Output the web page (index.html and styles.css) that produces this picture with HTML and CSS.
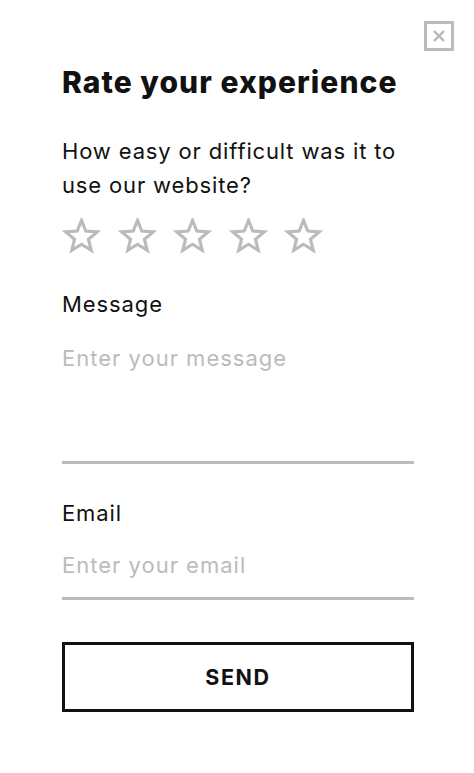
FILE: index.html
```html
<!DOCTYPE html>
<html lang="en">
<head>
<meta charset="utf-8">
<title>Rate your experience</title>
<link rel="stylesheet" href="styles.css">
</head>
<body>
<div class="dialog">
  <div class="topbar">
    <button class="close" aria-label="Close">
      <svg viewBox="0 0 24 24"><path d="M4.5 4.5 L19.5 19.5 M19.5 4.5 L4.5 19.5" stroke="#b5b5b5" stroke-width="3.4" fill="none"/></svg>
    </button>
  </div>
  <h1 class="title">Rate your experience</h1>
  <p class="question">How easy or difficult was it to use our website?</p>
  <div class="stars">
    <svg class="star" viewBox="0 0 40 37"><polygon points="20,2 24.41,12.93 36.17,13.75 27.13,21.32 29.99,32.75 20,26.5 10.01,32.75 12.87,21.32 3.83,13.75 15.59,12.93" fill="none" stroke="#bbbbbb" stroke-width="3.2"/></svg>
    <svg class="star" viewBox="0 0 40 37"><polygon points="20,2 24.41,12.93 36.17,13.75 27.13,21.32 29.99,32.75 20,26.5 10.01,32.75 12.87,21.32 3.83,13.75 15.59,12.93" fill="none" stroke="#bbbbbb" stroke-width="3.2"/></svg>
    <svg class="star" viewBox="0 0 40 37"><polygon points="20,2 24.41,12.93 36.17,13.75 27.13,21.32 29.99,32.75 20,26.5 10.01,32.75 12.87,21.32 3.83,13.75 15.59,12.93" fill="none" stroke="#bbbbbb" stroke-width="3.2"/></svg>
    <svg class="star" viewBox="0 0 40 37"><polygon points="20,2 24.41,12.93 36.17,13.75 27.13,21.32 29.99,32.75 20,26.5 10.01,32.75 12.87,21.32 3.83,13.75 15.59,12.93" fill="none" stroke="#bbbbbb" stroke-width="3.2"/></svg>
    <svg class="star" viewBox="0 0 40 37"><polygon points="20,2 24.41,12.93 36.17,13.75 27.13,21.32 29.99,32.75 20,26.5 10.01,32.75 12.87,21.32 3.83,13.75 15.59,12.93" fill="none" stroke="#bbbbbb" stroke-width="3.2"/></svg>
  </div>
  <label class="label" for="msg">Message</label>
  <textarea id="msg" class="field textarea" placeholder="Enter your message"></textarea>
  <label class="label email-label" for="email">Email</label>
  <input id="email" class="field input" type="email" placeholder="Enter your email">
  <button class="send">SEND</button>
</div>
</body>
</html>
```
FILE: styles.css
```css
* { box-sizing: border-box; }
html, body { margin: 0; padding: 0; background: #ffffff; }
body {
  font-family: Inter, "Noto Sans", "Liberation Sans", sans-serif;
  color: #111111;
}
.dialog {
  display: flex;
  flex-direction: column;
  padding: 21px 20px 0 62px;
}
.topbar {
  display: flex;
  justify-content: flex-end;
  height: 30px;
}
.close {
  width: 30px;
  height: 30px;
  border: 3px solid #bbbbbb;
  background: #fff;
  padding: 0;
  display: flex;
  align-items: center;
  justify-content: center;
  cursor: pointer;
}
.close svg { width: 16px; height: 16px; display: block; }
.title {
  margin: 13px 30px 0 0;
  font-size: 30px;
  line-height: 36px;
  font-weight: 800;
  letter-spacing: 1.05px;
  white-space: nowrap;
}
.question {
  margin: 34px 40px 0 0;
  font-size: 22px;
  line-height: 34px;
  font-weight: 400;
  letter-spacing: 0.85px;
}
.stars {
  display: flex;
  gap: 16.5px;
  margin-top: 16px;
}
.star { width: 39px; height: 37px; display: block; }
.label {
  display: block;
  margin: 32px 0 0 0;
  font-size: 22px;
  line-height: 34px;
  letter-spacing: 0.9px;
}
.field {
  display: block;
  width: 352px;
  border: none;
  border-bottom: 3px solid #bbbbbb;
  outline: none;
  font-family: inherit;
  font-size: 22px;
  line-height: 34px;
  letter-spacing: 1px;
  color: #111;
  padding: 0;
  background: transparent;
  resize: none;
}
.field::placeholder { color: #bbbbbb; }
.textarea { height: 143px; padding-top: 20px; }
.input { height: 70px; padding-top: 18px; padding-bottom: 15px; }
.send {
  margin-top: 42px;
  width: 352px;
  height: 70px;
  border: 3.5px solid #111111;
  background: #fff;
  font-family: inherit;
  font-size: 21.5px;
  font-weight: 700;
  color: #111;
  letter-spacing: 1.6px;
  cursor: pointer;
}
```
